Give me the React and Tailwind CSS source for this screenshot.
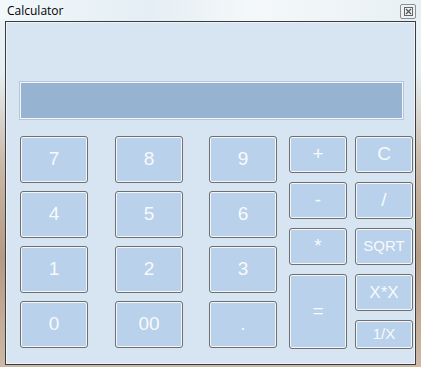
// Calculator window, classic Windows 7 look

const btn =
  "flex items-center justify-center rounded-[3px] border border-[#6f6f6f] bg-[#b9d1ea] text-[#f7fafd] shadow-[inset_0_0_0_1px_#f3f7fb] font-['Liberation_Sans',Arial,sans-serif]";

function Key({ label, className = "" }) {
  return <div className={`${btn} ${className}`}>{label}</div>;
}

export default function App() {
  return (
    <div className="w-[421px] h-[367px] overflow-hidden flex flex-col bg-[linear-gradient(180deg,#eef4f7_0%,#e6eef2_20%,#c9b8a6_45%,#b59a84_70%,#cdb9a6_100%)]">
      {/* title bar */}
      <div className="h-[21px] flex items-center justify-between pl-[7px] pr-[5px] bg-[linear-gradient(90deg,#f2f8fb,#e4eef4_35%,#f4f8fa_60%,#e8f0f4)]">
        <span className="text-[12px] text-black font-['Open_Sans',sans-serif] leading-none">Calculator</span>
        <div className="w-[16px] h-[15px] mt-[2px] border border-[#8a8f96] rounded-[2px] bg-[#eef2f5] flex items-center justify-center">
          <svg width="9" height="9" viewBox="0 0 9 9">
            <rect x="0.5" y="0.5" width="8" height="8" fill="none" stroke="#666" />
            <path d="M2 2 L7 7 M7 2 L2 7" stroke="#555" strokeWidth="1.2" />
          </svg>
        </div>
      </div>

      {/* client area */}
      <div className="ml-[5px] w-[411px] h-[344px] border border-[#3c3c3c] bg-[#d7e4f2] shadow-[inset_0_0_0_1px_#eef4fa]">
        <div className="ml-[14px] mt-[60px] w-[383px] h-[37px] bg-[#97b3d2] border border-[#f2f6fa] outline outline-1 outline-[#b7c7d8]" />

        <div className="flex ml-[14px] mt-[17px]">
          <div className="flex flex-col gap-[8px] w-[68px] text-[19px]">
            <Key label="7" className="h-[47px]" />
            <Key label="4" className="h-[47px]" />
            <Key label="1" className="h-[47px]" />
            <Key label="0" className="h-[47px]" />
          </div>
          <div className="flex flex-col gap-[8px] w-[68px] ml-[27px] text-[19px]">
            <Key label="8" className="h-[47px]" />
            <Key label="5" className="h-[47px]" />
            <Key label="2" className="h-[47px]" />
            <Key label="00" className="h-[47px]" />
          </div>
          <div className="flex flex-col gap-[8px] w-[68px] ml-[26px] text-[19px]">
            <Key label="9" className="h-[47px]" />
            <Key label="6" className="h-[47px]" />
            <Key label="3" className="h-[47px]" />
            <Key label="." className="h-[47px]" />
          </div>
          <div className="flex flex-col gap-[9px] w-[58px] ml-[12px] text-[19px]">
            <Key label="+" className="h-[37px]" />
            <Key label="-" className="h-[37px]" />
            <Key label="*" className="h-[37px] items-start pt-[3px]" />
            <Key label="=" className="h-[75px]" />
          </div>
          <div className="flex flex-col gap-[9px] w-[58px] ml-[8px]">
            <Key label="C" className="h-[37px] text-[19px]" />
            <Key label="/" className="h-[37px] text-[19px]" />
            <Key label="SQRT" className="h-[37px] text-[15px]" />
            <Key label="X*X" className="h-[37px] text-[17px]" />
            <Key label="1/X" className="h-[29px] text-[15px]" />
          </div>
        </div>
      </div>
    </div>
  );
}
